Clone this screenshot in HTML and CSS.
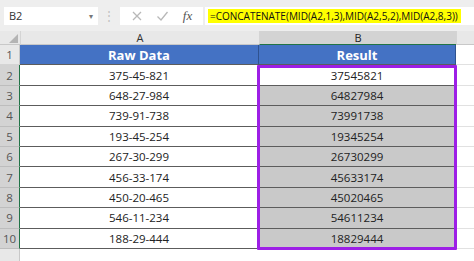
FILE: index.html
```html
<!DOCTYPE html>
<html lang="en">
<head>
    <meta charset="UTF-8">
    <title>Concatenate MID</title>
    <link rel="stylesheet" href="styles.css">
</head>
<body>
    <div class="formula-bar">
        <div class="name-box">
            <span>B2</span>
            <span class="caret">&#9662;</span>
        </div>
        <div class="grip">&#8942;</div>
        <div class="func-box">
            <svg width="12" height="12" viewBox="0 0 12 12"><path d="M2 2 L10 10 M10 2 L2 10" stroke="#b8b8b8" stroke-width="1.3" fill="none"/></svg>
            <svg width="13" height="12" viewBox="0 0 13 12"><path d="M1.5 6.5 L5 10 L11.5 2" stroke="#b8b8b8" stroke-width="1.3" fill="none"/></svg>
            <span class="fx">fx</span>
        </div>
        <div class="formula-input">
            <span class="formula">=CONCATENATE(MID(A2,1,3),MID(A2,5,2),MID(A2,8,3))</span>
        </div>
    </div>

    <div class="sheet">
        <div class="corner"><span class="tri"></span></div>
        <div class="col-head">A</div>
        <div class="col-head active">B</div>
        <div class="col-head blank"></div>

        <div class="row-head">1</div>
        <div class="cell title">Raw Data</div>
        <div class="cell title">Result</div>
        <div class="cell empty"></div>

        <div class="row-head sel">2</div>
        <div class="cell">375-45-821</div>
        <div class="cell res first">37545821</div>
        <div class="cell empty"></div>

        <div class="row-head sel">3</div>
        <div class="cell">648-27-984</div>
        <div class="cell res">64827984</div>
        <div class="cell empty"></div>

        <div class="row-head sel">4</div>
        <div class="cell">739-91-738</div>
        <div class="cell res">73991738</div>
        <div class="cell empty"></div>

        <div class="row-head sel">5</div>
        <div class="cell">193-45-254</div>
        <div class="cell res">19345254</div>
        <div class="cell empty"></div>

        <div class="row-head sel">6</div>
        <div class="cell">267-30-299</div>
        <div class="cell res">26730299</div>
        <div class="cell empty"></div>

        <div class="row-head sel">7</div>
        <div class="cell">456-33-174</div>
        <div class="cell res">45633174</div>
        <div class="cell empty"></div>

        <div class="row-head sel">8</div>
        <div class="cell">450-20-465</div>
        <div class="cell res">45020465</div>
        <div class="cell empty"></div>

        <div class="row-head sel">9</div>
        <div class="cell">546-11-234</div>
        <div class="cell res">54611234</div>
        <div class="cell empty"></div>

        <div class="row-head sel">10</div>
        <div class="cell">188-29-444</div>
        <div class="cell res">18829444</div>
        <div class="cell empty"></div>

        <div class="row-head last"></div>
        <div class="cell tail"></div>
        <div class="cell tail"></div>
        <div class="cell tail"></div>

        <!-- selection outline over B2:B10 -->
        <div class="selection"></div>
    </div>
</body>
</html>
```

FILE: styles.css
```css
body {
    margin: 0;
    padding: 0;
    width: 474px;
    height: 261px;
    overflow: hidden;
    background-color: #ffffff;
    font-family: "Open Sans", "Noto Sans", sans-serif;
}

/* barra de fórmulas */
.formula-bar {
    display: flex;
    align-items: center;
    height: 31px;
    padding-left: 4px;
    background-color: #eeeeee;
    box-sizing: border-box;
}

.name-box {
    display: flex;
    align-items: center;
    justify-content: space-between;
    width: 94px;
    height: 18px;
    padding: 0 5px;
    box-sizing: border-box;
    background: #fff;
    font-size: 11px;
    color: #333;
}

.caret {
    font-size: 8px;
    color: #777;
}

.grip {
    width: 22px;
    text-align: center;
    color: #c2c2c2;
    font-size: 12px;
}

.func-box {
    display: flex;
    align-items: center;
    justify-content: space-around;
    width: 83px;
    height: 18px;
    padding: 0 4px;
    box-sizing: border-box;
    background: #fff;
}

.fx {
    font-family: "Liberation Serif", serif;
    font-style: italic;
    font-size: 13px;
    color: #555;
}

.formula-input {
    flex: 1;
    display: flex;
    align-items: center;
    height: 18px;
    margin-left: 2px;
    padding-left: 3px;
    background: #fff;
}

.formula {
    background: #ffff00;
    font-size: 10px;
    line-height: 14px;
    padding: 0 3px 0 2px;
    color: #111;
    white-space: nowrap;
}

/* hoja */
.sheet {
    position: relative;
    display: grid;
    grid-template-columns: 20px 239px 197px 1fr;
    grid-template-rows: 14px repeat(10, 20.4px) 1fr;
    height: 230px;
    font-size: 11.5px;
    color: #222;
}

.corner {
    background: #e8e8e8;
    display: flex;
    align-items: flex-end;
    justify-content: flex-end;
    padding: 0 2px 1px 0;
    border-bottom: 1px solid #c8c8c8;
}

.tri {
    width: 0;
    height: 0;
    border-left: 9px solid transparent;
    border-bottom: 9px solid #b4b4b4;
}

.col-head {
    display: flex;
    align-items: center;
    justify-content: center;
    background: #e8e8e8;
    border-bottom: 1px solid #c8c8c8;
    border-left: 1px solid #d4d4d4;
    font-size: 11px;
    color: #333;
    box-sizing: border-box;
}

.col-head.active {
    background: #d3d3d3;
    border-bottom: 1px solid #217346;
    color: #222;
}

.col-head.blank {
    background: #e8e8e8;
}

.row-head {
    display: flex;
    align-items: center;
    justify-content: center;
    background: #e8e8e8;
    border-bottom: 1px solid #d4d4d4;
    border-right: 1px solid #c8c8c8;
    font-size: 11.5px;
    color: #555;
    box-sizing: border-box;
}

.row-head.sel {
    background: #d3d3d3;
    border-right: 1px solid #217346;
    border-bottom: 1px solid #bdbdbd;
}

.row-head.last {
    background: #e8e8e8;
    border-bottom: none;
}

.cell {
    display: flex;
    align-items: center;
    justify-content: center;
    border-bottom: 1px solid #5c5c5c;
    border-right: 1px solid #5c5c5c;
    box-sizing: border-box;
    background: #fff;
}

.cell.title {
    background: #4472c4;
    color: #fff;
    font-weight: bold;
    font-size: 13px;
    border-right: 1px solid #2f528f;
}

.cell.res {
    background: #c9c9c9;
}

.cell.res.first {
    background: #fff;
}

.cell.empty,
.cell.tail {
    border-bottom: 1px solid #e1e1e1;
    border-right: none;
}

.cell.tail {
    border-bottom: none;
}

.selection {
    position: absolute;
    grid-column: 3 / 4;
    grid-row: 3 / 12;
    top: 0;
    bottom: -1px;
    left: -2px;
    right: -1px;
    border: 3px solid #9d1fe6;
    border-radius: 1px;
    pointer-events: none;
}
```
